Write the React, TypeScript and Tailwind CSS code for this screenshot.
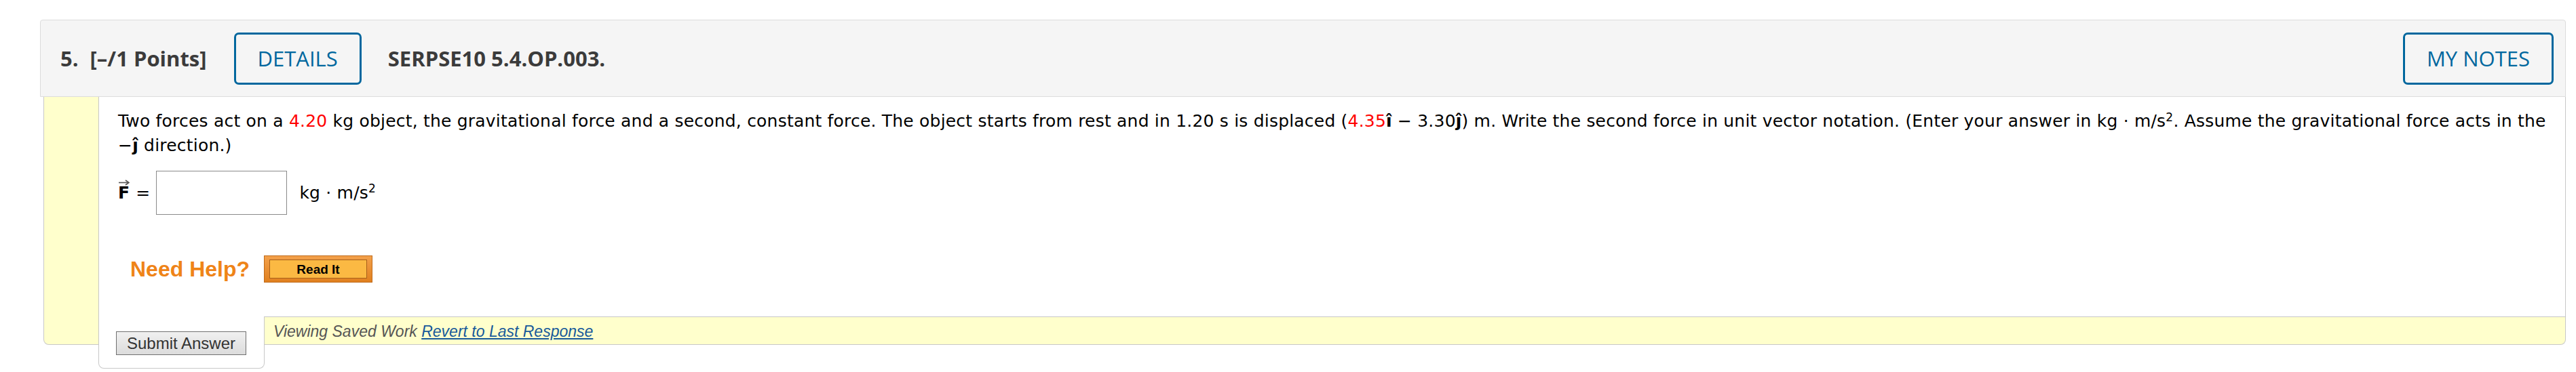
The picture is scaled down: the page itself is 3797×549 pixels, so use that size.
import React from "react";

const sans = { fontFamily: '"DejaVu Sans", Verdana, sans-serif' };

export default function App() {
  return (
    <div className="bg-white w-[3797px] h-[549px] pt-[29px] pl-[59px]">
      <div className="w-[3723px]">
        {/* Header */}
        <div className="h-[114px] flex items-center justify-between border border-[#dcdcdc] bg-[#f5f5f5] rounded-t-[4px] pl-[29px] pr-[17px] font-['Open_Sans',sans-serif]">
          <div className="flex items-center text-[31px] text-[#3b3b3b]">
            <span className="font-bold">5.</span>
            <span className="font-bold ml-[17px]">[–/1 Points]</span>
            <button className="ml-[40px] h-[77px] px-[32px] border-[3px] border-[#00679e] rounded-[7px] text-[#00679e] text-[31px] font-normal leading-none">
              DETAILS
            </button>
            <span className="font-bold ml-[39px]">SERPSE10 5.4.OP.003.</span>
          </div>
          <button className="h-[77px] px-[32px] border-[3px] border-[#00679e] rounded-[7px] text-[#00679e] text-[31px] font-normal leading-none">
            MY NOTES
          </button>
        </div>

        {/* Body */}
        <div className="ml-[5px] flex border-l border-r border-b border-[#c8c8c8] rounded-b-[8px] bg-[#ffffcc]">
          <div className="w-[80px] shrink-0" />
          <div className="flex-1 flex flex-col">
            <div className="bg-white border-l border-[#c8c8c8] pl-[28px] pr-[28px] pt-[18px] pb-[50px] text-black text-[25px] tracking-[0.2px]" style={sans}>
              <p className="leading-[36px] whitespace-nowrap">
                Two forces act on a <span className="text-[#ff0000]">4.20</span> kg object, the gravitational force and a second, constant force. The object starts from rest and in 1.20 s is displaced (<span className="text-[#ff0000]">4.35</span><b>î</b> − 3.30<b>ĵ</b>) m. Write the second force in unit vector notation. (Enter your answer in kg · m/s<sup className="text-[17px] leading-none">2</sup>. Assume the gravitational force acts in the
                <br />
                −<b>ĵ</b> direction.)
              </p>
              <div className="mt-[19px] flex items-center h-[65px] leading-[36px]">
                <span className="relative font-bold">
                  F
                  <svg className="absolute left-[1px] top-[-2px]" width="16" height="9" viewBox="0 0 16 9">
                    <line x1="0" y1="4.5" x2="14" y2="4.5" stroke="#555" strokeWidth="1.6" />
                    <path d="M10 1 L15 4.5 L10 8" fill="none" stroke="#555" strokeWidth="1.6" />
                  </svg>
                </span>
                <span className="ml-[9px]">=</span>
                <input className="ml-[9px] w-[193px] h-[65px] border border-[#8a8a8a] bg-white outline-none" />
                <span className="ml-[18px]">
                  kg · m/s<sup className="text-[17px] leading-none">2</sup>
                </span>
              </div>
              <div className="mt-[60px] ml-[18px] flex items-center h-[40px] font-['Liberation_Sans',Arial,sans-serif] tracking-normal">
                <span className="text-[32px] font-bold text-[#ef8418] leading-none">Need Help?</span>
                <div className="ml-[21px] w-[160px] h-[40px] p-[5px_7px] bg-[linear-gradient(#f3a04a,#e0801f)] border border-[#c06a18] flex">
                  <div className="flex-1 bg-[#fbb943] border border-[#a8601a] flex items-center justify-center text-[19px] font-bold text-black leading-none">
                    Read It
                  </div>
                </div>
              </div>
            </div>
            <div className="flex items-start">
              <div className="relative z-10 w-[245px] h-[77px] -mb-[36px] bg-white border-l border-r border-b border-[#c8c8c8] rounded-b-[8px] pl-[25px] pt-[22px]">
                <button className="w-[192px] h-[35px] border border-[#707070] bg-[linear-gradient(#f0f0f0,#dcdcdc)] text-[24px] text-[#333] leading-none font-['Liberation_Sans',Arial,sans-serif]">
                  Submit Answer
                </button>
              </div>
              <div className="flex-1 h-[41px] border-t border-[#c8c8c8] pl-[13px] pt-[8px] text-[23px] italic leading-[26px] font-['Liberation_Sans',Arial,sans-serif]">
                <span className="text-[#555]">Viewing Saved Work </span>
                <a className="text-[#17599a] underline">Revert to Last Response</a>
              </div>
            </div>
          </div>
        </div>
      </div>
    </div>
  );
}
